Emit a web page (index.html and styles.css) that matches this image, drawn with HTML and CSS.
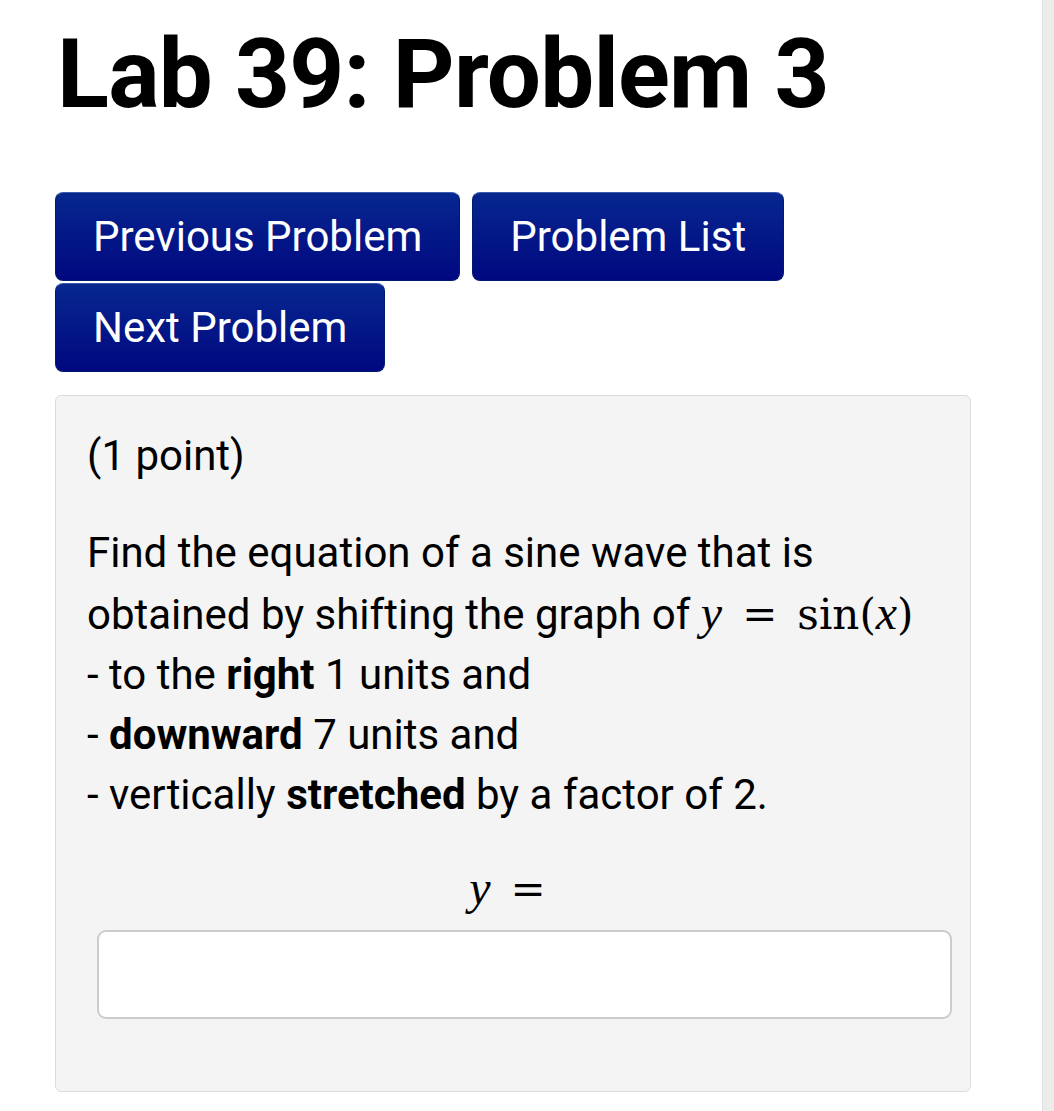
FILE: index.html
```html
<!DOCTYPE html>
<html lang="en">
<head>
    <meta charset="UTF-8">
    <meta name="viewport" content="width=device-width, initial-scale=1.0">
    <title>Lab 39: Problem 3</title>
    <link rel="stylesheet" href="styles.css">
</head>
<body>
    <div class="page">
        <h1>Lab 39: Problem 3</h1>

        <!-- Navigation -->
        <div class="nav-buttons">
            <button class="nav-btn">Previous Problem</button>
            <button class="nav-btn">Problem List</button>
            <button class="nav-btn">Next Problem</button>
        </div>

        <!-- Problem body -->
        <div class="problem">
            <p class="points">(1 point)</p>
            <p class="statement">
                Find the equation of a sine wave that is<br>
                obtained by shifting the graph of
                <span class="math"><i>y</i><span class="op">=</span>sin(<i>x</i>)</span><br>
                - to the <b>right</b> 1 units and<br>
                - <b>downward</b> 7 units and<br>
                - vertically <b>stretched</b> by a factor of 2.
            </p>
            <div class="answer-label"><span class="math"><i>y</i><span class="op">=</span></span></div>
            <input type="text" class="answer" aria-label="answer">
        </div>
    </div>
    <div class="scroll-track"></div>
</body>
</html>
```

FILE: styles.css
```css
body {
    font-family: Roboto, "Liberation Sans", Arial, sans-serif;
    background-color: #ffffff;
    color: #000000;
    margin: 0;
    padding: 0;
    display: flex;
    min-height: 100vh;
}
.page {
    flex: 1;
    padding: 0 0 0 55px;
}
.scroll-track {
    width: 11px;
    background: #ececec;
    border-left: 1px solid #e2e2e2;
}
h1 {
    font-size: 96px;
    font-weight: 700;
    line-height: 112px;
    margin: 18px 0 0 2px;
    letter-spacing: -0.8px;
}
.nav-buttons {
    display: flex;
    flex-wrap: wrap;
    gap: 2px 12px;
    width: 760px;
    margin-top: 62px;
}
.nav-btn {
    height: 89px;
    padding: 0 37px;
    border: 1px solid #001a70;
    border-top-color: #3a5bb0;
    border-radius: 8px;
    background: linear-gradient(#07278f, #000880);
    color: #ffffff;
    font-family: Roboto, "Liberation Sans", Arial, sans-serif;
    font-size: 42px;
    cursor: pointer;
}
.problem {
    width: 851px;
    margin-top: 23px;
    padding: 18px 32px 72px 31px;
    background: #f4f4f4;
    border: 1px solid #dcdcdc;
    border-radius: 6px;
}
.points {
    font-size: 42px;
    line-height: 60px;
    margin: 12px 0 0 0;
}
.statement {
    font-size: 42px;
    line-height: 60px;
    margin: 37px 0 0 0;
}
b {
    font-weight: 700;
}
.math {
    font-family: "DejaVu Serif", "Liberation Serif", serif;
    font-size: 42px;
}
.math i {
    font-family: "Liberation Serif", serif;
    font-size: 48px;
}
.op {
    margin: 0 20px;
}
.answer-label {
    text-align: center;
    line-height: 60px;
    margin-top: 33px;
    padding-left: 10px;
}
.answer {
    display: block;
    box-sizing: border-box;
    width: 855px;
    height: 89px;
    margin: 1px 0 0 10px;
    border: 2px solid #cccccc;
    border-radius: 9px;
    background: #ffffff;
}
```
